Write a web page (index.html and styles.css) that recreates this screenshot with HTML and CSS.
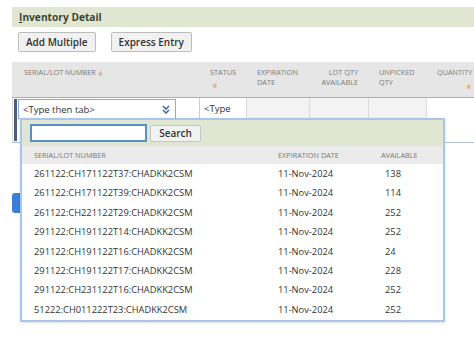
FILE: index.html
```html
<!DOCTYPE html>
<html lang="en">
<head>
    <meta charset="UTF-8">
    <meta name="viewport" content="width=device-width, initial-scale=1.0">
    <title>Inventory Detail</title>
    <link rel="stylesheet" href="styles.css">
</head>
<body>
    <div class="panel">
        <div class="panel-head"><span class="access-key">I</span>nventory Detail</div>
        <div class="actions">
            <button type="button" class="btn">Add Multiple</button>
            <button type="button" class="btn">Express Entry</button>
        </div>

        <div class="grid-head">
            <div class="th th-serial">Serial/Lot Number<span class="req">*</span></div>
            <div class="th">Status<span class="req req-block">*</span></div>
            <div class="th">Expiration<br>Date</div>
            <div class="th th-right">Lot Qty<br>Available</div>
            <div class="th">Unpicked<br>Qty</div>
            <div class="th">Quantity<span class="req req-block req-qty">*</span></div>
        </div>

        <div class="grid-row">
            <div class="cell-serial">
                <span class="row-mark"></span>
                <div class="combo">
                    <span>&lt;Type then tab&gt;</span>
                    <svg width="8" height="9" viewBox="0 0 8 9">
                        <polyline points="1,1 4,4 7,1" fill="none" stroke="#4a6c9e" stroke-width="1.6"/>
                        <polyline points="1,5 4,8 7,5" fill="none" stroke="#4a6c9e" stroke-width="1.6"/>
                    </svg>
                </div>
                <div class="gap-cell"></div>
            </div>
            <div class="cell">&lt;Type</div>
            <div class="cell cell-off"></div>
            <div class="cell cell-off"></div>
            <div class="cell cell-off"></div>
            <div class="cell cell-last"></div>
        </div>

        <div class="footer">
            <button type="button" class="btn-primary" aria-label="OK"></button>
        </div>

        <!-- lot picker popup -->
        <div class="popup">
            <div class="popup-search">
                <input type="text" class="search-input">
                <button type="button" class="search-btn">Search</button>
            </div>
            <div class="popup-head">
                <span>Serial/Lot Number</span>
                <span>Expiration Date</span>
                <span>Available</span>
            </div>
            <div class="popup-row"><span>261122:CH171122T37:CHADKK2CSM</span><span>11-Nov-2024</span><span class="qty">138</span></div>
            <div class="popup-row"><span>261122:CH171122T39:CHADKK2CSM</span><span>11-Nov-2024</span><span class="qty">114</span></div>
            <div class="popup-row"><span>261122:CH221122T29:CHADKK2CSM</span><span>11-Nov-2024</span><span class="qty">252</span></div>
            <div class="popup-row"><span>291122:CH191122T14:CHADKK2CSM</span><span>11-Nov-2024</span><span class="qty">252</span></div>
            <div class="popup-row"><span>291122:CH191122T16:CHADKK2CSM</span><span>11-Nov-2024</span><span class="qty">24</span></div>
            <div class="popup-row"><span>291122:CH191122T17:CHADKK2CSM</span><span>11-Nov-2024</span><span class="qty">228</span></div>
            <div class="popup-row"><span>291122:CH231122T16:CHADKK2CSM</span><span>11-Nov-2024</span><span class="qty">252</span></div>
            <div class="popup-row"><span>51222:CH011222T23:CHADKK2CSM</span><span>11-Nov-2024</span><span class="qty">252</span></div>
        </div>
    </div>
</body>
</html>
```

FILE: styles.css
```css
body {
    margin: 0;
    padding: 0;
    min-height: 346px;
    font-family: "Open Sans", "Liberation Sans", sans-serif;
    color: #333;
    background-color: #fff;
}
.panel {
    position: relative;
    margin: 7px 0 0 12px;
    width: 462px;
}
.panel-head {
    height: 20px;
    line-height: 20px;
    padding-left: 7px;
    background-color: #e1e6d3;
    font-weight: 700;
    font-size: 10.2px;
    color: #3d4635;
}
.access-key {
    text-decoration: underline;
}
.actions {
    display: flex;
    gap: 15px;
    padding: 5px 0 0 6px;
}
.btn {
    height: 20px;
    padding: 0 7px;
    border: 1px solid #bcbcbc;
    border-radius: 2px;
    background-color: #f1f1f1;
    font-family: inherit;
    font-weight: 600;
    font-size: 10px;
    color: #333;
}

.grid-head,
.grid-row {
    display: grid;
    grid-template-columns: 188px 47px 63px 59px 58px 1fr;
}
.grid-head {
    margin-top: 10px;
    height: 35px;
    background-color: #e6e6e6;
    border-bottom: 1px solid #a3b0c2;
}
.th {
    padding: 5px 0 0 10px;
    font-size: 7.3px;
    line-height: 10px;
    color: #7a7a7a;
    text-transform: uppercase;
    white-space: nowrap;
}
.th-serial {
    padding-left: 12px;
}
.th-right {
    text-align: right;
    padding: 5px 11px 0 0;
}
.req {
    display: inline-block;
    margin-left: 2px;
    font-size: 10px;
    line-height: 10px;
    color: #d9a45e;
    vertical-align: -4px;
}
.req-block {
    display: block;
    margin: 5px 0 0 2px;
}
.req-qty {
    margin: 6px 0 0 29px;
}

.grid-row {
    height: 44px;
    border-bottom: 1px solid #b4bfcd;
    box-shadow: inset 1px 0 0 #dcdcdc;
}
.cell-serial {
    display: flex;
    padding: 1px 0 0 2px;
}
.row-mark {
    width: 3px;
    height: 42px;
    margin-right: 1px;
    background-color: #4d5d7a;
}
.combo {
    width: 158px;
    height: 20px;
    box-sizing: border-box;
    border: 1px solid #8eabd2;
    display: flex;
    align-items: center;
    justify-content: space-between;
    padding: 0 5px 0 4px;
    font-size: 9.5px;
    background-color: #fff;
}
.gap-cell {
    flex: 1;
    height: 21px;
    margin-top: -1px;
    border-right: 1px solid #c3cddb;
}
.cell {
    height: 21px;
    box-sizing: border-box;
    border-right: 1px solid #dcdcdc;
    padding-left: 4px;
    font-size: 9.5px;
    line-height: 21px;
}
.cell-off {
    background-color: #f3f3f3;
}
.cell-last {
    border-right: none;
}

.footer {
    margin-top: 50px;
}
.btn-primary {
    width: 60px;
    height: 20px;
    border: none;
    border-radius: 3px;
    background-color: #3b7fd6;
}

.popup {
    position: absolute;
    left: 8px;
    top: 111px;
    width: 425px;
    box-sizing: border-box;
    padding-bottom: 1px;
    border: 2px solid #a8c6ea;
    background-color: #fff;
    box-shadow: 0 1px 3px rgba(0, 0, 0, 0.12);
}
.popup-search {
    display: flex;
    align-items: center;
    gap: 3px;
    height: 26px;
    padding-left: 8px;
    background-color: #e1e6d3;
}
.search-input {
    width: 117px;
    height: 18px;
    box-sizing: border-box;
    margin: 0;
    border: 2px solid #5590cc;
    background-color: #fff;
    outline: none;
}
.search-btn {
    width: 51px;
    height: 17px;
    padding: 0;
    border: 1px solid #c6c6c6;
    border-radius: 2px;
    background-color: #f2f2f2;
    font-family: inherit;
    font-weight: 600;
    font-size: 10px;
    color: #333;
}
.popup-head,
.popup-row {
    display: grid;
    grid-template-columns: 244px 103px 1fr;
    padding-left: 12px;
}
.popup-head {
    height: 18px;
    line-height: 18px;
    background-color: #ebebeb;
    font-size: 7.3px;
    color: #777;
    text-transform: uppercase;
}
.popup-row {
    height: 19.4px;
    line-height: 19.4px;
    font-size: 9.3px;
}
.popup-row .qty {
    padding-left: 4px;
}
```
